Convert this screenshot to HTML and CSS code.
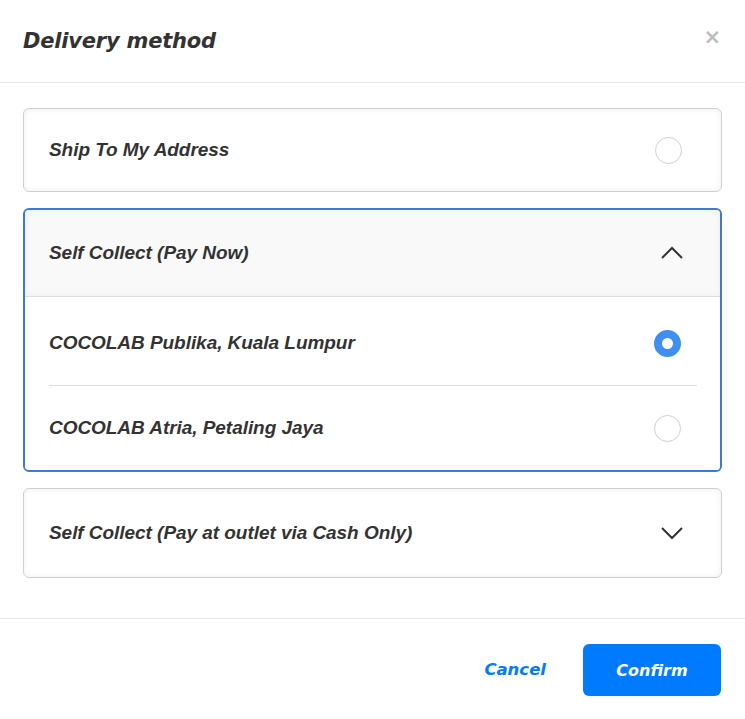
FILE: index.html
```html
<!DOCTYPE html>
<html>
<head>
<meta charset="utf-8">
<link rel="stylesheet" href="styles.css">
</head>
<body>
<div class="modal">
  <div class="modal-header">
    <h2 class="title">Delivery method</h2>
    <span class="close">&#215;</span>
  </div>
  <div class="modal-body">
    <div class="card">
      <div class="row row-single">
        <span class="label">Ship To My Address</span>
        <span class="radio"></span>
      </div>
    </div>
    <div class="card card-active">
      <div class="row row-head">
        <span class="label">Self Collect (Pay Now)</span>
        <svg class="chev" width="24" height="14" viewBox="0 0 24 14"><path d="M2 12 L12 2 L22 12" fill="none" stroke="#333" stroke-width="2"/></svg>
      </div>
      <div class="options">
        <div class="row row-opt row-sep">
          <span class="label">COCOLAB Publika, Kuala Lumpur</span>
          <span class="radio radio-on"></span>
        </div>
        <div class="row row-opt">
          <span class="label">COCOLAB Atria, Petaling Jaya</span>
          <span class="radio"></span>
        </div>
      </div>
    </div>
    <div class="card">
      <div class="row row-last">
        <span class="label">Self Collect (Pay at outlet via Cash Only)</span>
        <svg class="chev" width="24" height="14" viewBox="0 0 24 14"><path d="M2 2 L12 12 L22 2" fill="none" stroke="#333" stroke-width="2"/></svg>
      </div>
    </div>
  </div>
  <div class="modal-footer">
    <button class="btn-cancel">Cancel</button>
    <button class="btn-confirm">Confirm</button>
  </div>
</div>
</body>
</html>
```
FILE: styles.css
```css
* { box-sizing: border-box; }
html, body { margin: 0; padding: 0; background: #fff; }
body { font-family: "Liberation Sans", Arial, sans-serif; color: #333; }
.modal { width: 745px; }
.modal-header {
  height: 83px;
  display: flex;
  align-items: center;
  justify-content: space-between;
  padding: 0 24px 0 23px;
  border-bottom: 1px solid #e5e5e5;
}
.title {
  margin: 0;
  font-family: "DejaVu Sans", sans-serif;
  font-weight: bold;
  font-style: italic;
  font-size: 21px;
  color: #333;
  letter-spacing: -0.2px;
}
.close {
  color: #bdbdbd;
  font-family: "DejaVu Sans", sans-serif;
  font-weight: bold;
  font-size: 21px;
  margin-top: -8px;
}
.modal-body {
  padding: 25px 23px 40px 23px;
  display: flex;
  flex-direction: column;
  gap: 16px;
}
.card {
  border: 1px solid #cfcfcf;
  border-radius: 6px;
  box-shadow: inset 0 0 6px rgba(0,0,0,0.07);
  overflow: hidden;
}
.card-active {
  border: 2px solid #3a7bd9;
}
.row {
  display: flex;
  align-items: center;
  justify-content: space-between;
  padding: 0 39px 0 25px;
}
.label {
  font-weight: bold;
  font-style: italic;
  font-size: 19px;
  color: #333;
  letter-spacing: -0.05px;
}
.row-single { height: 82px; }
.row-head {
  height: 87px;
  background: #f9f9f9;
  border-bottom: 1px solid #dedede;
  padding-left: 24px;
  padding-right: 38px;
  box-shadow: inset 0 0 6px rgba(0,0,0,0.05);
}
.row-last { height: 88px; padding-right: 39px; }
.options { padding: 0 23px 0 24px; background: #fff; }
.row-opt { padding: 0 16px 0 0; }
.row-sep { height: 89px; padding-top: 4px; border-bottom: 1px solid #dedede; }
.row-opt:last-child { height: 84px; }
.radio {
  width: 27px;
  height: 27px;
  border-radius: 50%;
  border: 1px solid #cfcfcf;
  background: #fff;
  flex: none;
}
.radio-on {
  border: 8px solid #3f8ef2;
}
.chev { flex: none; margin-right: -2px; }
.modal-footer {
  border-top: 1px solid #e5e5e5;
  height: 101px;
  display: flex;
  align-items: center;
  justify-content: flex-end;
  padding: 0 24px 0 0;
  gap: 37px;
}
.btn-cancel, .btn-confirm {
  font-family: "DejaVu Sans", sans-serif;
  font-weight: bold;
  font-style: italic;
  font-size: 16px;
  border: none;
  cursor: pointer;
}
.btn-cancel {
  background: none;
  color: #007bff;
  padding: 0;
  font-size: 16.5px;
}
.btn-confirm {
  background: #007bff;
  color: #fff;
  width: 138px;
  height: 52px;
  border-radius: 6px;
  margin-top: 2px;
}
```
